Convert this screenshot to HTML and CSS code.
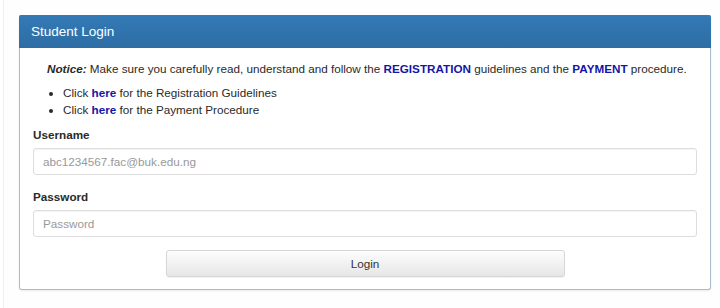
FILE: index.html
```html
<!DOCTYPE html>
<html lang="en">

<head>
    <meta charset="utf-8">
    <meta name="viewport" content="width=device-width, initial-scale=1.0">
    <title>Student Login</title>
    <link rel="stylesheet" href="styles.css">
</head>

<body>
    <div class="wrap">
        <div class="panel">
            <div class="panel-heading">
                <h3 class="panel-title">Student Login</h3>
            </div>
            <div class="panel-body">
                <div class="notice">
                    <p><b><i>Notice:</i></b> Make sure you carefully read, understand and follow the <a href="#">REGISTRATION</a> guidelines and the <a href="#">PAYMENT</a> procedure.</p>
                    <ul>
                        <li>Click <a href="#">here</a> for the Registration Guidelines</li>
                        <li>Click <a href="#">here</a> for the Payment Procedure</li>
                    </ul>
                </div>
                <form>
                    <div class="form-group">
                        <label for="username">Username</label>
                        <input type="text" id="username" class="form-control" placeholder="abc1234567.fac@buk.edu.ng">
                    </div>
                    <div class="form-group">
                        <label for="password">Password</label>
                        <input type="password" id="password" class="form-control" placeholder="Password">
                    </div>
                    <div class="actions">
                        <button type="button" class="btn">Login</button>
                    </div>
                </form>
            </div>
        </div>
    </div>
</body>

</html>
```

FILE: styles.css
```css
* {
    box-sizing: border-box;
}

body {
    margin: 0;
    background-color: #fff;
    font-family: "Liberation Sans", Arial, sans-serif;
    font-size: 11.7px;
    color: #2a2a2a;
}

.wrap {
    margin-left: 3px;
    border-left: 1px solid #eef0f2;
    padding: 15px 9px 0 15px;
    min-height: 308px;
    background-color: #fefefe;
}

.panel {
    border: 1px solid #a9bccd;
    border-top-color: #2e6da4;
    border-radius: 3px;
    background-color: #fff;
    box-shadow: 0 1px 2px rgba(0, 0, 0, .08);
}

.panel-heading {
    height: 33px;
    padding: 0 12px;
    display: flex;
    align-items: center;
    background: linear-gradient(#337ab7, #2e6da4);
    border-radius: 2px 2px 0 0;
    margin: -1px -1px 0;
}

.panel-title {
    margin: 0;
    font-size: 13.5px;
    font-weight: normal;
    color: #fff;
}

.panel-body {
    padding: 13px 13px 12px;
}

.notice {
    padding-left: 14px;
}

.notice p {
    margin: 0 0 7px;
    line-height: 16px;
}

.notice ul {
    margin: 0;
    padding-left: 16px;
    line-height: 17px;
}

a {
    color: #1515a8;
    font-weight: bold;
    text-decoration: none;
}

.form-group {
    margin-top: 9px;
}

.form-group + .form-group {
    margin-top: 14px;
}

label {
    display: block;
    font-weight: bold;
    margin-bottom: 6px;
    line-height: 15px;
}

.form-control {
    display: block;
    width: 100%;
    height: 27px;
    padding: 0 9px;
    border: 1px solid #ddd;
    border-radius: 3px;
    font-family: inherit;
    font-size: 11.7px;
    color: #555;
    box-shadow: inset 0 1px 1px rgba(0, 0, 0, .04);
}

.form-control::placeholder {
    color: #999;
}

.actions {
    display: flex;
    justify-content: center;
    margin-top: 13px;
}

.btn {
    width: 399px;
    height: 27px;
    border: 1px solid #d6d6d6;
    border-radius: 3px;
    background: linear-gradient(#fdfdfd, #e6e6e6);
    font-family: inherit;
    font-size: 11.7px;
    color: #333;
    box-shadow: 0 1px 1px rgba(0, 0, 0, .06);
}
```
